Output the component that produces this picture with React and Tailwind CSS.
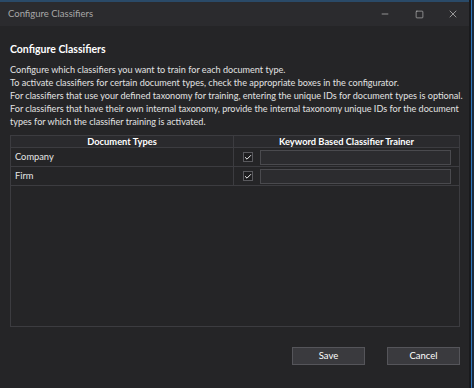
import { Minus, Square, X, Check } from 'lucide-react';

const rows = ['Company', 'Firm'];

const App = () => {
  return (
    <div className="w-[474px] h-[388px] flex bg-[#1c2633] overflow-hidden" style={{ fontFamily: 'Lato, "Open Sans", sans-serif' }}>
      <div className="w-[469px] h-full flex flex-col pt-[2px] bg-[#2a4a68]">
        {/* title bar */}
        <div className="h-[24px] flex items-center bg-[#2b2b2e] pl-[8px] text-[9.5px] text-[#a8a8a8]">
          <span className="flex-1">Configure Classifiers</span>
          <div className="flex items-center text-[#d0d0d0]">
            <div className="w-[34px] flex justify-center"><Minus size={10} strokeWidth={1.5} /></div>
            <div className="w-[34px] flex justify-center"><Square size={9} strokeWidth={1.5} /></div>
            <div className="w-[34px] flex justify-center mr-[-1px]"><X size={12} strokeWidth={1.3} /></div>
          </div>
        </div>

        {/* body */}
        <div className="flex-1 flex flex-col bg-[#252527] px-[10px] pt-[16px]">
          <h2 className="text-[10.5px] font-bold text-white leading-[14px]">Configure Classifiers</h2>
          <div className="mt-[7px] text-[9.1px] leading-[13px] text-[#e2e2e2] whitespace-nowrap">
            <p>Configure which classifiers you want to train for each document type.</p>
            <p>To activate classifiers for certain document types, check the appropriate boxes in the configurator.</p>
            <p>For classifiers that use your defined taxonomy for training, entering the unique IDs for document types is optional.</p>
            <p>For classifiers that have their own internal taxonomy, provide the internal taxonomy unique IDs for the document</p>
            <p>types for which the classifier training is activated.</p>
          </div>

          <div className="mt-[7px] w-[450px] h-[192px] border border-[#3c3c40] flex flex-col bg-[#252527]">
            <div className="h-[12px] flex border-b border-[#3c3c40] bg-[#2a2a2d] text-[9.3px] font-bold text-white leading-[12px]">
              <div className="w-[223px] text-center border-r border-[#3c3c40]">Document Types</div>
              <div className="flex-1 text-center">Keyword Based Classifier Trainer</div>
            </div>
            {rows.map((name) => (
              <div key={name} className="h-[19px] flex border-b border-[#3c3c40] text-[9.3px] text-[#e6e6e6]">
                <div className="w-[223px] flex items-center pl-[4px] border-r border-[#3c3c40]">{name}</div>
                <div className="flex-1 flex items-center pl-[9px] pr-[8px]">
                  <div className="w-[10px] h-[10px] border border-[#5a5a5e] bg-[#1e1e20] flex items-center justify-center text-white">
                    <Check size={9} strokeWidth={2.8} />
                  </div>
                  <div className="ml-[7px] flex-1 h-[15px] border border-[#4a4a4e] bg-[#2c2c2f]" />
                </div>
              </div>
            ))}
          </div>

          <div className="mt-[20px] flex justify-end gap-[22px] w-[450px]">
            <button className="w-[73px] h-[18px] bg-[#3a3a3e] border border-[#55555a] text-[9.5px] text-white">Save</button>
            <button className="w-[73px] h-[18px] bg-[#3a3a3e] border border-[#55555a] text-[9.5px] text-white">Cancel</button>
          </div>
        </div>
      </div>
      <div className="flex-1 flex">
        <div className="w-[2px] bg-[#1a1a1c]" />
        <div className="w-[1px] bg-[#2f78c0]" />
        <div className="flex-1 bg-[#1d2a3a]" />
      </div>
    </div>
  );
};

export default App;
